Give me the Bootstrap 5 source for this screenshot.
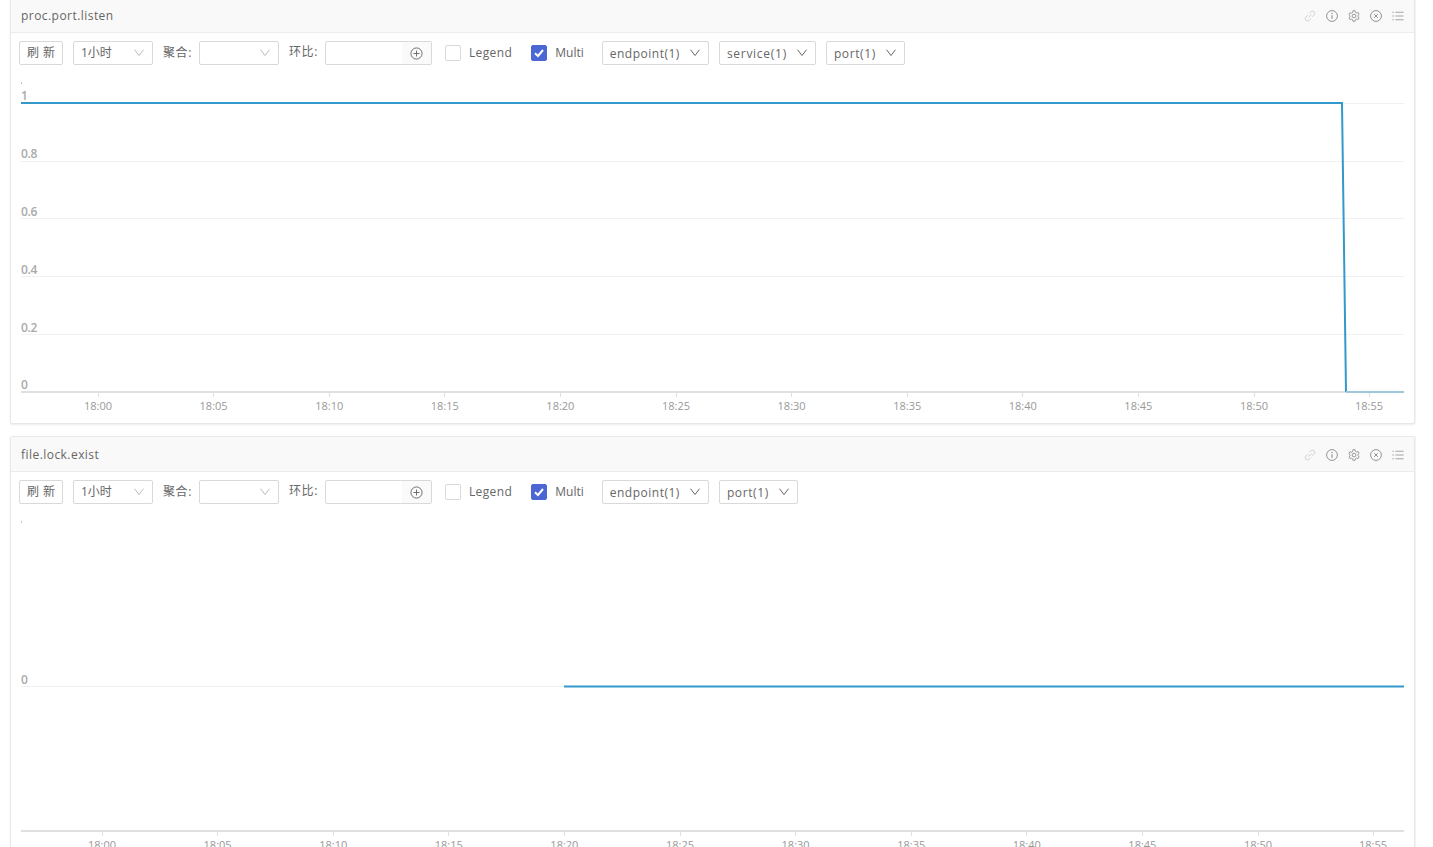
<!DOCTYPE html>
<html lang="zh">
<head>
<meta charset="utf-8">
<title>Monitor</title>
<link rel="stylesheet" href="https://cdn.jsdelivr.net/npm/bootstrap@5.3.0/dist/css/bootstrap.min.css">
<style>
html,body{height:847px;overflow:hidden;background:#fff}
body{font-family:"Open Sans","Noto Sans CJK SC",sans-serif;font-size:12px;color:#666;padding:0 18px 0 10px}
.panel-stack{display:flex;flex-direction:column;gap:12px;margin-top:-3px}
.panel{border:1px solid #e8e8e8;border-radius:2px;box-shadow:0 1px 2px rgba(0,0,0,.08),1px 0 1px rgba(0,0,0,.03);--bs-card-bg:#fff}
.panel .card-header{height:35px;padding:2px 10px 0;background:#f9f9f9;border-bottom:1px solid #ececec;border-radius:0;color:#666;font-size:12px;letter-spacing:.45px}
.head-icons{gap:10px;color:#888}
.head-icons svg{width:12px;height:12px;display:block}
.head-icons .faint{color:#ccc}
.panel .card-body{padding:8px 0 0 0}
.bar{height:24px;padding-left:8px;color:#666}
.tool-btn{height:24px;padding:0 7px;border:1px solid #d9d9d9;border-radius:2px;background:#fff;color:#666;font-size:12px;line-height:22px;white-space:nowrap}
.w-refresh{width:44px;padding:0;text-align:center;margin-right:10px;word-spacing:1px}
.sel{width:80px;justify-content:space-between;padding:0 7px}
.sel svg{width:12px;height:12px;color:#bbb}
.m10{margin-right:10px}
.lab{margin-right:7px;line-height:22px;letter-spacing:.6px}
.lab-up{margin-top:-3px}
.addon-input{width:107px;height:24px;border:1px solid #d9d9d9;border-radius:2px;overflow:hidden;margin-right:13px}
.addon-input span{flex:1}
.addon-input i{width:29px;background:#fafafa;display:flex;align-items:center;justify-content:center;color:#666}
.addon-input svg{width:13px;height:13px}
.box{width:16px;height:16px;border:1px solid #d9d9d9;border-radius:2px;background:#fff;margin-right:8px}
.box.on{background:#4a67d3;border-color:#4a67d3;display:flex;align-items:center;justify-content:center}
.box.on svg{width:12px;height:12px}
.chk-text{line-height:22px;margin-right:19px}
.legend-text{letter-spacing:.4px}
.multi-text{margin-right:18px}
.drop{gap:9px;color:#666;margin-right:10px;padding:0 7px;letter-spacing:.5px}
.drop span{padding-top:1px}
.drop-wide{letter-spacing:.72px}
.drop-port{letter-spacing:.62px}
.drop svg{width:12px;height:12px;color:#666;flex:none}
.plot{display:block;width:1403px}
.plot-a{height:354px;margin-top:4px}
.plot-b{height:370px;margin-top:4px}
.plot text{font-family:"Open Sans",sans-serif;font-size:11px;fill:#999}
.plot .yl{font-weight:600;fill:#aaa;font-size:12px;letter-spacing:-.3px}
.grid{stroke:#f0f0f0;stroke-width:1}
.axis{stroke:#e0e0e0;stroke-width:2}
.tick{stroke:#e0e0e0;stroke-width:1}
.series{stroke:#3398cc;stroke-width:2;fill:none}
</style>
</head>
<body>
<svg width="0" height="0" class="position-absolute">
  <defs>
    <symbol id="i-link" viewBox="0 0 16 16"><path d="M6.6 9.4 9.6 6.4M7.2 4.3l1.9-1.900a3 3 0 0 1 4.300 0 3 3 0 0 1 0 4.300l-2 2M8.800 11.700l-1.900 1.900a3 3 0 0 1-4.300 0 3 3 0 0 1 0-4.300l2-2" fill="none" stroke="currentColor" stroke-width="1.200" stroke-linecap="round"/></symbol>
    <symbol id="i-info" viewBox="0 0 16 16"><circle cx="8" cy="8" r="7.200" fill="none" stroke="currentColor" stroke-width="1.200"/><path d="M8 7v4.800" stroke="currentColor" stroke-width="1.400"/><circle cx="8" cy="4.700" r=".9" fill="currentColor"/></symbol>
    <symbol id="i-gear" viewBox="0 0 16 16"><path d="M6.600.9h2.800l.4 2 1.700 1 1.900-.7 1.400 2.500-1.500 1.300v2l1.500 1.300-1.400 2.500-1.900-.7-1.700 1-.4 2H6.600l-.4-2-1.700-1-1.900.7L1.200 10.800l1.500-1.300v-2L1.200 6.200l1.400-2.500 1.900.7 1.700-1z" fill="none" stroke="currentColor" stroke-width="1.100" stroke-linejoin="round"/><circle cx="8" cy="8" r="2.500" fill="none" stroke="currentColor" stroke-width="1.100"/></symbol>
    <symbol id="i-close" viewBox="0 0 16 16"><circle cx="8" cy="8" r="7.200" fill="none" stroke="currentColor" stroke-width="1.200"/><path d="M5.500 5.500l5 5M10.500 5.500l-5 5" stroke="currentColor" stroke-width="1.200"/></symbol>
    <symbol id="i-list" viewBox="0 0 16 16"><path d="M4.500 3h11M4.500 8h11M4.500 13h11" stroke="currentColor" stroke-width="1"/><path d="M.5 3h2M.5 8h2M.5 13h2" stroke="currentColor" stroke-width="1"/></symbol>
    <symbol id="i-down" viewBox="0 0 12 12"><path d="M1.500 2.700 6 8.500 10.500 2.700" fill="none" stroke="currentColor" stroke-width="1"/></symbol>
    <symbol id="i-plus" viewBox="0 0 14 14"><circle cx="7" cy="7" r="6" fill="none" stroke="currentColor" stroke-width="1"/><path d="M7 3.800v6.400M3.800 7h6.400" stroke="currentColor" stroke-width="1"/></symbol>
    <symbol id="i-check" viewBox="0 0 12 12"><path d="M2 6.200 5 9l5-6" fill="none" stroke="#fff" stroke-width="2"/></symbol>
  </defs>
</svg>

<div class="panel-stack">
  <div class="card panel">
    <div class="card-header d-flex align-items-center justify-content-between">
      <span>proc.port.listen</span>
      <div class="d-flex head-icons">
        <svg class="faint"><use href="#i-link"/></svg><svg><use href="#i-info"/></svg><svg><use href="#i-gear"/></svg><svg><use href="#i-close"/></svg><svg><use href="#i-list"/></svg>
      </div>
    </div>
    <div class="card-body">
      <div class="d-flex align-items-center bar">
        <button class="tool-btn w-refresh">刷 新</button>
        <div class="tool-btn sel d-flex align-items-center m10"><span>1小时</span><svg><use href="#i-down"/></svg></div>
        <span class="lab">聚合:</span>
        <div class="tool-btn sel d-flex align-items-center justify-content-end m10"><svg><use href="#i-down"/></svg></div>
        <span class="lab lab-up">环比:</span>
        <div class="addon-input d-flex"><span></span><i><svg><use href="#i-plus"/></svg></i></div>
        <div class="box"></div><span class="chk-text legend-text">Legend</span>
        <div class="box on"><svg><use href="#i-check"/></svg></div><span class="chk-text multi-text">Multi</span>
        <div class="tool-btn drop d-flex align-items-center"><span>endpoint(1)</span><svg><use href="#i-down"/></svg></div>
        <div class="tool-btn drop drop-wide d-flex align-items-center"><span>service(1)</span><svg><use href="#i-down"/></svg></div>
        <div class="tool-btn drop drop-port d-flex align-items-center"><span>port(1)</span><svg><use href="#i-down"/></svg></div>
      </div>
      <svg class="plot plot-a" viewBox="0 0 1403 354">
        <circle cx="10.500" cy="14" r=".6" fill="#3398cc"/>
        <path class="grid" d="M10 34.500H1393M10 92.500H1393M10 149.500H1393M10 207.500H1393M10 265.500H1393"/>
        <path class="axis" d="M10 323H1393"/>
        <path class="tick" d="M87.500 323v5M202.500 323v5M318.500 323v5M433.500 323v5M549.500 323v5M665.500 323v5M780.500 323v5M896.500 323v5M1011.500 323v5M1127.500 323v5M1243.500 323v5M1358.500 323v5"/>
        <text class="yl" x="10" y="31">1</text>
        <text class="yl" x="10" y="89">0.8</text>
        <text class="yl" x="10" y="147">0.6</text>
        <text class="yl" x="10" y="205">0.4</text>
        <text class="yl" x="10" y="263">0.2</text>
        <text class="yl" x="10" y="320">0</text>
        <g text-anchor="middle">
          <text x="87" y="341">18:00</text><text x="202.600" y="341">18:05</text><text x="318.200" y="341">18:10</text><text x="433.800" y="341">18:15</text><text x="549.400" y="341">18:20</text><text x="665" y="341">18:25</text><text x="780.600" y="341">18:30</text><text x="896.200" y="341">18:35</text><text x="1011.800" y="341">18:40</text><text x="1127.400" y="341">18:45</text><text x="1243" y="341">18:50</text><text x="1358" y="341">18:55</text>
        </g>
        <path class="series" d="M10 34H1331L1335 323"/>
        <path d="M1335 323H1393" fill="none" stroke="#9fc7da" stroke-width="2"/>
      </svg>
    </div>
  </div>

  <div class="card panel">
    <div class="card-header d-flex align-items-center justify-content-between">
      <span>file.lock.exist</span>
      <div class="d-flex head-icons">
        <svg class="faint"><use href="#i-link"/></svg><svg><use href="#i-info"/></svg><svg><use href="#i-gear"/></svg><svg><use href="#i-close"/></svg><svg><use href="#i-list"/></svg>
      </div>
    </div>
    <div class="card-body">
      <div class="d-flex align-items-center bar">
        <button class="tool-btn w-refresh">刷 新</button>
        <div class="tool-btn sel d-flex align-items-center m10"><span>1小时</span><svg><use href="#i-down"/></svg></div>
        <span class="lab">聚合:</span>
        <div class="tool-btn sel d-flex align-items-center justify-content-end m10"><svg><use href="#i-down"/></svg></div>
        <span class="lab lab-up">环比:</span>
        <div class="addon-input d-flex"><span></span><i><svg><use href="#i-plus"/></svg></i></div>
        <div class="box"></div><span class="chk-text legend-text">Legend</span>
        <div class="box on"><svg><use href="#i-check"/></svg></div><span class="chk-text multi-text">Multi</span>
        <div class="tool-btn drop d-flex align-items-center"><span>endpoint(1)</span><svg><use href="#i-down"/></svg></div>
        <div class="tool-btn drop drop-port d-flex align-items-center"><span>port(1)</span><svg><use href="#i-down"/></svg></div>
      </div>
      <svg class="plot plot-b" viewBox="0 0 1403 370">
        <circle cx="10.500" cy="14" r=".6" fill="#3398cc"/>
        <path class="grid" d="M10 178.500H553"/>
        <path class="axis" d="M10 323H1393"/>
        <path class="tick" d="M91.500 323v5M206.500 323v5M322.500 323v5M437.500 323v5M553.500 323v5M669.500 323v5M784.500 323v5M900.500 323v5M1015.500 323v5M1131.500 323v5M1247.500 323v5M1362.500 323v5"/>
        <text class="yl" x="10" y="176">0</text>
        <g text-anchor="middle">
          <text x="91" y="341">18:00</text><text x="206.600" y="341">18:05</text><text x="322.200" y="341">18:10</text><text x="437.800" y="341">18:15</text><text x="553.400" y="341">18:20</text><text x="669" y="341">18:25</text><text x="784.600" y="341">18:30</text><text x="900.200" y="341">18:35</text><text x="1015.800" y="341">18:40</text><text x="1131.400" y="341">18:45</text><text x="1247" y="341">18:50</text><text x="1362" y="341">18:55</text>
        </g>
        <path class="series" d="M553 178.500H1393"/>
      </svg>
    </div>
  </div>
</div>
</body>
</html>
